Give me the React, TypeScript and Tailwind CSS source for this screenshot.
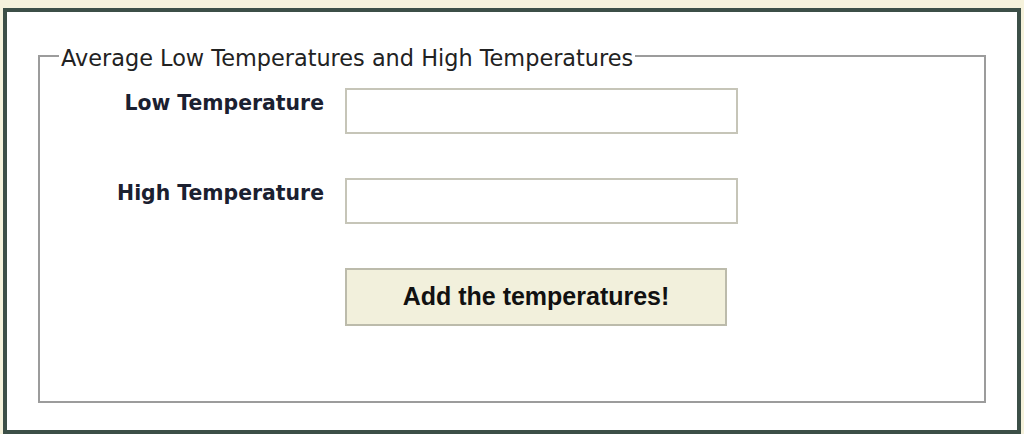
import React from "react";

export default function App() {
  return (
    <div className="h-[434px] w-[1024px] overflow-hidden bg-[#f5f2dc] pl-[3px] pt-[8px]">
      <div className="box-border h-[426px] w-[1018px] border-4 border-[#3c4f47] bg-white pt-[31px]">
        <fieldset className="ml-[31px] box-border h-[360px] w-[948px] border-2 border-[#9c9c9c] pb-0">
          <legend
            className="ml-[19px] px-[2px] pt-[4px] text-[22.4px] leading-[22px] text-[#222]"
            style={{ fontFamily: '"DejaVu Sans", Verdana, sans-serif' }}
          >
            Average Low Temperatures and High Temperatures
          </legend>
          <div className="flex flex-col gap-[44px] pt-[19px]">
            <div className="flex items-start gap-[21px]">
              <label
                className="w-[284px] pt-[3px] text-right text-[20.4px] font-bold leading-[24px] text-[#1b2030]"
                style={{ fontFamily: '"DejaVu Sans", Verdana, sans-serif' }}
              >
                Low Temperature
              </label>
              <input
                type="text"
                className="box-border h-[46px] w-[393px] border-2 border-[#c6c5b8] bg-white outline-none"
              />
            </div>
            <div className="flex items-start gap-[21px]">
              <label
                className="w-[284px] pt-[3px] text-right text-[20.4px] font-bold leading-[24px] text-[#1b2030]"
                style={{ fontFamily: '"DejaVu Sans", Verdana, sans-serif' }}
              >
                High Temperature
              </label>
              <input
                type="text"
                className="box-border h-[46px] w-[393px] border-2 border-[#c6c5b8] bg-white outline-none"
              />
            </div>
            <div className="flex gap-[21px]">
              <div className="w-[284px]" />
              <button
                className="box-border h-[58px] w-[382px] border-2 border-[#bcbbab] bg-[#f2f0dc] text-[25px] font-bold text-[#111]"
                style={{ fontFamily: '"Liberation Sans", Arial, sans-serif' }}
              >
                Add the temperatures!
              </button>
            </div>
          </div>
        </fieldset>
      </div>
    </div>
  );
}
